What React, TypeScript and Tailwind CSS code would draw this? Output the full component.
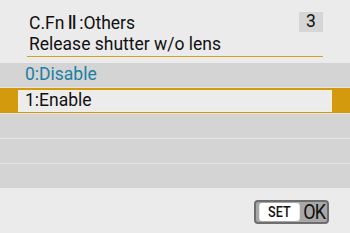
import React from 'react';

const rows = [
  { label: '0:Disable', state: 'teal' },
  { label: '1:Enable', state: 'selected' },
  { label: '', state: '' },
  { label: '', state: '' },
  { label: '', state: '' },
];

const App = () => {
  return (
    <div
      className="w-[350px] h-[233px] bg-[#ebebeb] flex flex-col text-[#111]"
      style={{ fontFamily: 'Roboto, "Noto Sans", sans-serif' }}
    >
      <div className="px-[27px] pt-[11px]">
        <div className="flex items-center justify-between h-[22px]">
          <span className="pl-[2px] text-[17.5px] leading-none">
            C.Fn<span style={{ fontFamily: '"DejaVu Sans", sans-serif' }} className="text-[20px] pl-[3px] pr-[2px]">Ⅱ</span>:Others
          </span>
          <span className="w-[24px] h-[20px] bg-[#d6d6d6] flex items-center justify-center text-[17.5px] leading-none">
            3
          </span>
        </div>
        <div className="h-[24px] pl-[2px] text-[17.5px] leading-[23px] border-b border-[#d4a21e]">
          Release shutter w/o lens
        </div>
      </div>
      <div className="mt-[6px] flex flex-col gap-[1px] bg-[#e4e4e4]">
        {rows.map((row, i) =>
          row.state === 'selected' ? (
            <div key={i} className="h-[25px] bg-[#d39a0e] flex items-center pl-[18px] pr-[18px]">
              <div className="flex-1 h-[22px] bg-[#ececec] border border-[#f4f0e0] flex items-center pl-[6px] text-[17.5px] leading-none">
                {row.label}
              </div>
            </div>
          ) : (
            <div
              key={i}
              className={`h-[24px] bg-[#d4d4d4] flex items-center pl-[25px] text-[17.5px] leading-none ${
                row.state === 'teal' ? 'text-[#1b80a3]' : ''
              }`}
            >
              {row.label}
            </div>
          )
        )}
      </div>
      <div className="flex justify-end pr-[21px] pt-[12px]">
        <div className="w-[75px] h-[24px] rounded-[4px] border-2 border-[#6e6e6e] bg-[#a8a8a8] flex items-center p-[1px]">
          <div className="w-[45px] h-full rounded-[3px] bg-white flex items-center justify-center text-[14px] font-medium leading-none scale-x-90">
            SET
          </div>
          <div className="flex-1 text-center text-[20px] leading-none text-[#111] tracking-[-1px] scale-x-90">OK</div>
        </div>
      </div>
    </div>
  );
};

export default App;
